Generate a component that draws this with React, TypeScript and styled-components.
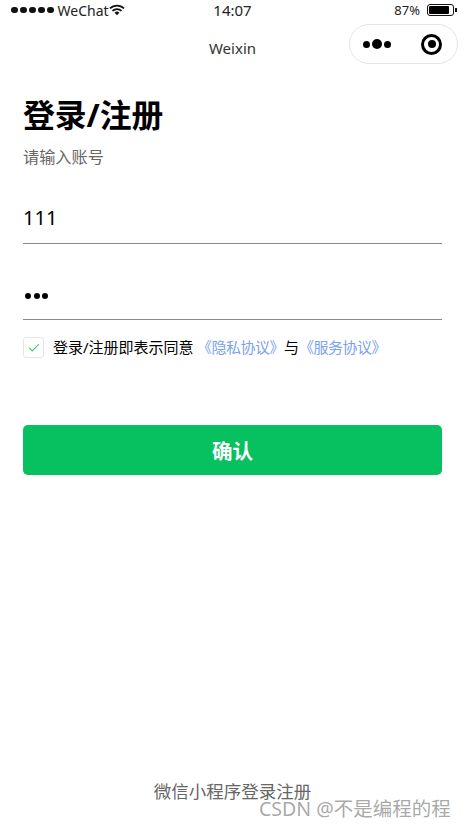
import styled, { createGlobalStyle } from "styled-components";
import { Check } from "lucide-react";

const FONT = `"Noto Sans", "Noto Sans CJK SC", sans-serif`;

const GlobalStyle = createGlobalStyle`
  html, body { margin: 0; padding: 0; background: #fff; }
  * { box-sizing: border-box; }
`;

const App = () => {
  return (
    <>
      <GlobalStyle />
      <Page>
        <StatusBar>
          <StatusLeft>
            <Signal>
              {[0, 1, 2, 3, 4].map((i) => (
                <SignalDot key={i} />
              ))}
            </Signal>
            <span>WeChat</span>
            <WifiIcon width="16" height="12" viewBox="0 0 16 12">
              <path d="M1 4.4a10 10 0 0 1 14 0" fill="none" stroke="#111" strokeWidth="1.8" />
              <path d="M3.5 6.9a6.4 6.4 0 0 1 9 0" fill="none" stroke="#111" strokeWidth="1.8" />
              <path d="M5.6 8.8 8 11.2l2.4-2.4a3.4 3.4 0 0 0-4.8 0z" fill="#111" />
            </WifiIcon>
          </StatusLeft>
          <StatusTime>14:07</StatusTime>
          <StatusRight>
            <span>87%</span>
            <Battery>
              <BatteryFill $level={87} />
            </Battery>
            <BatteryTip />
          </StatusRight>
        </StatusBar>
        <NavBar>
          <NavTitle>Weixin</NavTitle>
          <Capsule>
            <Dots>
              <Dot $size={7} />
              <Dot $size={10} />
              <Dot $size={7} />
            </Dots>
            <Record>
              <RecordInner />
            </Record>
          </Capsule>
        </NavBar>
        <Content>
          <Title>登录/注册</Title>
          <Subtitle>请输入账号</Subtitle>
          <Field $height={77} $offset={24}>111</Field>
          <Field $height={76} $offset={28}>
            <Secret>
              <SecretDot />
              <SecretDot />
              <SecretDot />
            </Secret>
          </Field>
          <Agreement>
            <CheckBox>
              <Check size={14} color="#22c55e" strokeWidth={1.8} />
            </CheckBox>
            <AgreementText>
              登录/注册即表示同意<LinkText> 《隐私协议》</LinkText>与<LinkText>《服务协议》</LinkText>
            </AgreementText>
          </Agreement>
          <Confirm>确认</Confirm>
        </Content>
        <Footer>微信小程序登录注册</Footer>
        <Watermark>CSDN @不是编程的程</Watermark>
      </Page>
    </>
  );
};

export default App;

const Page = styled.div`
  position: relative;
  display: flex;
  flex-direction: column;
  width: 465px;
  height: 828px;
  overflow: hidden;
  background: #fff;
  font-family: ${FONT};
  color: #000;
`;

const StatusBar = styled.div`
  display: grid;
  grid-template-columns: 1fr auto 1fr;
  align-items: center;
  height: 18px;
  font-size: 14px;
  color: #222;
`;

const StatusLeft = styled.div`
  display: flex;
  align-items: center;
  gap: 3px;
  padding-left: 11px;
`;

const Signal = styled.div`
  display: flex;
  gap: 2.5px;
  margin-right: 1px;
`;

const SignalDot = styled.span`
  width: 6.5px;
  height: 6.5px;
  border-radius: 50%;
  background: #111;
`;

const WifiIcon = styled.svg`
  margin-left: -3px;
`;

const StatusTime = styled.div`
  font-size: 15px;
`;

const StatusRight = styled.div`
  display: flex;
  align-items: center;
  justify-content: flex-end;
  font-size: 13px;
`;

const Battery = styled.div`
  width: 27px;
  height: 12px;
  margin-left: 7px;
  padding: 1px;
  border: 1px solid #111;
  border-radius: 3px;
`;

const BatteryFill = styled.div<{ $level: number }>`
  width: ${({ $level }) => $level}%;
  height: 100%;
  border-radius: 1px;
  background: #000;
`;

const BatteryTip = styled.div`
  width: 2px;
  height: 4px;
  margin-left: 1px;
  margin-right: 8px;
  background: #111;
`;

const NavBar = styled.div`
  position: relative;
  display: flex;
  align-items: center;
  justify-content: center;
  height: 60px;
`;

const NavTitle = styled.div`
  font-size: 15px;
  color: #333;
`;

const Capsule = styled.div`
  position: absolute;
  top: 6px;
  left: 349px;
  display: flex;
  align-items: center;
  justify-content: space-between;
  width: 109px;
  height: 40px;
  padding: 0 15px 0 13px;
  border: 1px solid #e5e5e5;
  border-radius: 20px;
`;

const Dots = styled.div`
  display: flex;
  align-items: center;
  gap: 2px;
`;

const Dot = styled.span<{ $size: number }>`
  width: ${({ $size }) => $size}px;
  height: ${({ $size }) => $size}px;
  border-radius: 50%;
  background: #000;
`;

const Record = styled.div`
  display: flex;
  align-items: center;
  justify-content: center;
  width: 21px;
  height: 21px;
  border: 3px solid #000;
  border-radius: 50%;
`;

const RecordInner = styled.span`
  width: 8px;
  height: 8px;
  border-radius: 50%;
  background: #000;
`;

const Content = styled.div`
  display: flex;
  flex-direction: column;
  padding: 18px 23px 0;
`;

const Title = styled.h1`
  margin: 0;
  height: 37px;
  font-size: 31.8px;
  line-height: 37px;
  font-weight: 700;
`;

const Subtitle = styled.div`
  margin-top: 14px;
  font-size: 16.2px;
  line-height: 20px;
  color: #666;
`;

const Field = styled.div<{ $height: number; $offset: number }>`
  display: flex;
  align-items: center;
  height: ${({ $height }) => $height}px;
  padding-top: ${({ $offset }) => $offset}px;
  font-size: 20px;
  border-bottom: 1px solid #888;
`;

const Secret = styled.div`
  display: flex;
  gap: 2.5px;
  padding-left: 2px;
`;

const SecretDot = styled.span`
  width: 6px;
  height: 6px;
  border-radius: 50%;
  background: #000;
`;

const Agreement = styled.div`
  display: flex;
  align-items: center;
  gap: 9px;
  margin-top: 17px;
`;

const CheckBox = styled.div`
  display: flex;
  align-items: center;
  justify-content: center;
  width: 21px;
  height: 21px;
  border: 1px solid #e6e6e6;
  border-radius: 3px;
`;

const AgreementText = styled.div`
  font-size: 15px;
  line-height: 21px;
  white-space: nowrap;
`;

const LinkText = styled.span`
  color: #7aa2ee;
  letter-spacing: -0.5px;
`;

const Confirm = styled.button`
  display: flex;
  align-items: center;
  justify-content: center;
  height: 50px;
  margin-top: 67px;
  border: none;
  border-radius: 5px;
  background: #07c160;
  color: #fff;
  font-family: ${FONT};
  font-size: 20.5px;
  font-weight: 700;
`;

const Footer = styled.div`
  margin-top: auto;
  padding-bottom: 26px;
  text-align: center;
  font-size: 17.5px;
  line-height: 22px;
  color: #666;
`;

const Watermark = styled.div`
  position: absolute;
  top: 798px;
  left: 259px;
  font-size: 19.5px;
  line-height: 22px;
  white-space: nowrap;
  color: rgba(130, 130, 130, 0.7);
`;
